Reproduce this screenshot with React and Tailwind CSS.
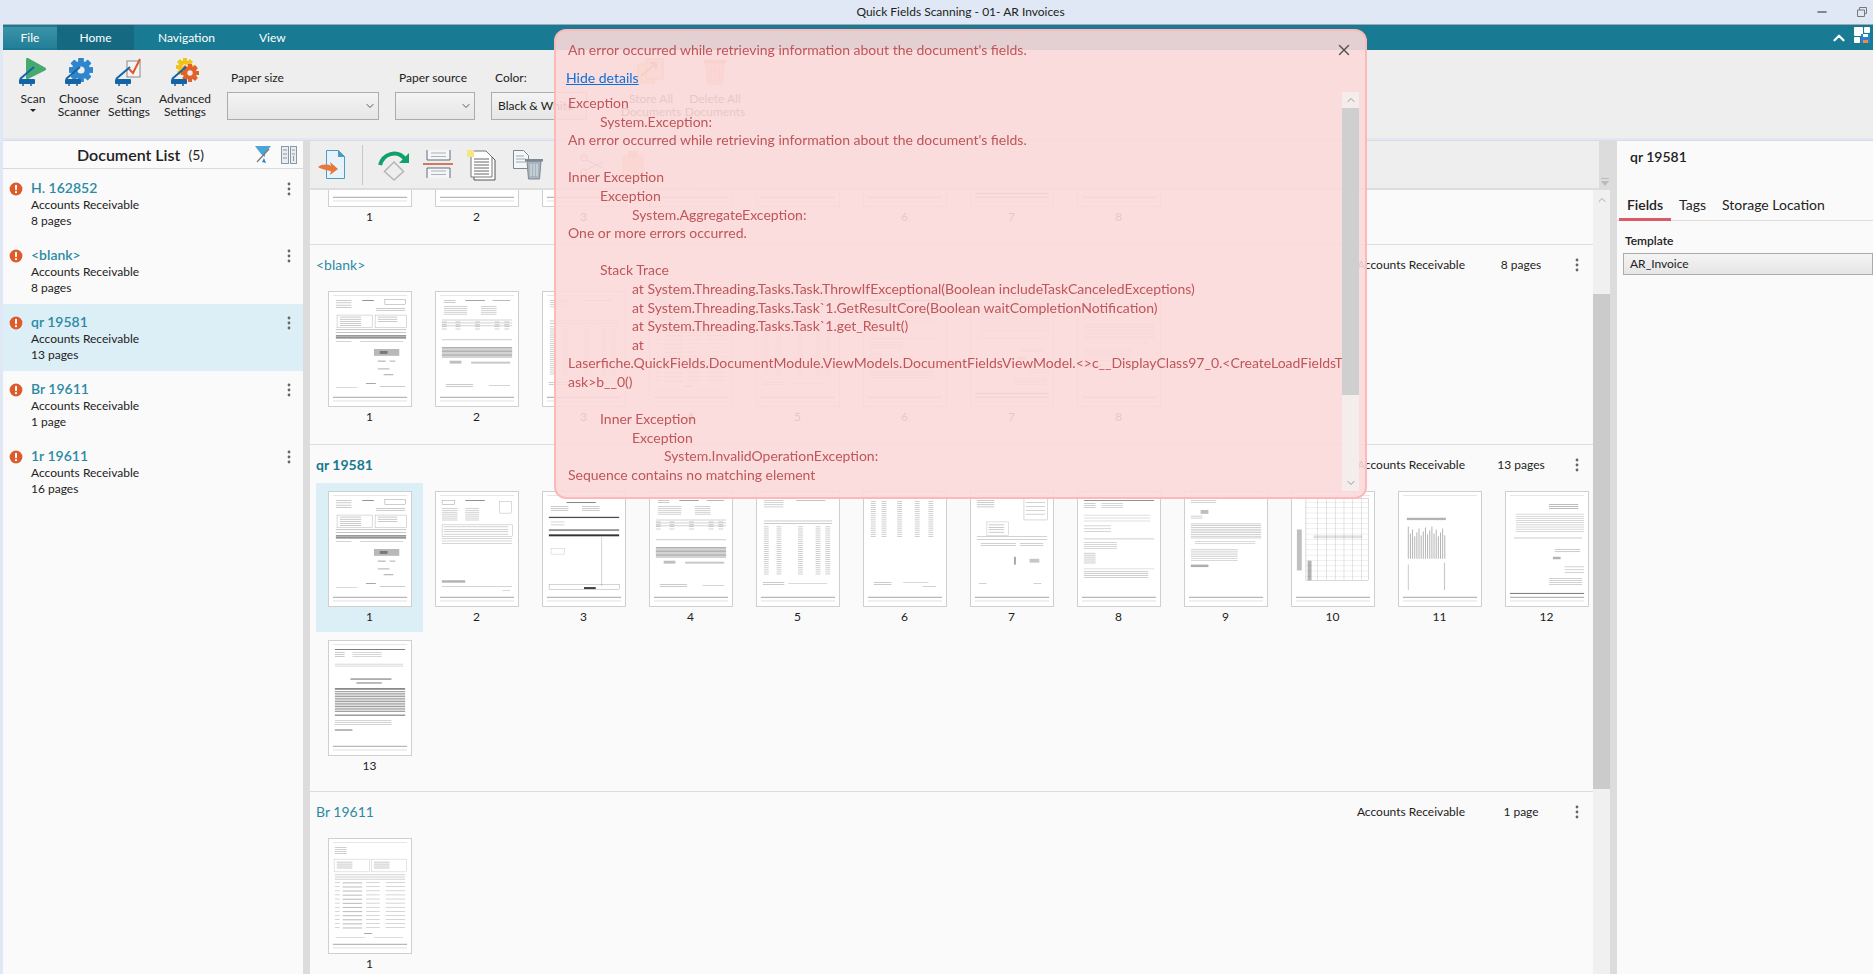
import React from 'react';
import { X, ChevronDown, ChevronUp, Minus } from 'lucide-react';

const FONT = { fontFamily: '"Lato", "Open Sans", sans-serif' };

// thumbnails are blurry scans, so they are only bars on a page: [x, y, w, h, opacity]
const rows = (x, y, w, n, gap, o = 0.35, h = 0.6) => Array.from({ length: n }, (_, i) => [x, y + i * gap, w, h, o]);
const box = (x, y, w, h, o = 0.4) => [[x, y, w, 0.5, o], [x, y + h, w, 0.5, o], [x, y, 0.5, h, o], [x + w, y, 0.5, h, o]];
const foot = [[4, 3, 76, 0.5, 0.2], [4, 107, 76, 0.8, 0.45], [4, 111, 76, 0.5, 0.25]];
const columns = (y, n, gap, xs) => xs.map((x) => rows(x, y, 5, n, gap, 0.32)).flat();

const invoice = (dark) => [
  ...foot, ...rows(7, 8, 16, 4, 2.4), [34, 8, 12, 0.8, 0.55], ...box(57, 7, 21, 5), ...rows(48, 16, 30, 2, 2),
  ...box(8, 23, 36, 13, 0.3), ...box(47, 23, 32, 13, 0.3), ...rows(11, 25, 22, 5, 2.2), ...rows(50, 25, 20, 3, 2.2),
  ...rows(7, 38, 72, 2, 3, 0.4), ...rows(7, 44, 72, 2, 2, dark ? 0.6 : 0.3, dark ? 1.2 : 0.6),
  [7, 50, 16, 0.7, 0.25], [32, 50, 44, 0.7, 0.25], [46, 58, 26, dark ? 7 : 4, 0.28], [52, 60, 8, 3, 0.35],
  [50, 70, 8, 0.8, 0.45], [62, 70, 6, 0.8, 0.4], [50, 78, 12, 0.8, 0.4], [56, 84, 10, 0.8, 0.45], [38, 93, 10, 0.8, 0.45], [52, 96, 26, 0.6, 0.35], [7, 97, 22, 0.5, 0.3],
];
const dense = [
  ...foot, ...rows(8, 8, 12, 2, 2), [30, 8, 20, 0.8, 0.45], [58, 8, 18, 0.8, 0.35], ...rows(8, 14, 24, 5, 2, 0.3), ...rows(46, 14, 16, 5, 2, 0.3),
  ...rows(6, 28, 72, 3, 3, 0.3), ...columns(30, 4, 2.4, [6, 20, 40, 60, 70]), [6, 48, 72, 1, 0.2], ...rows(6, 56, 72, 8, 1.4, 0.35, 0.9), [14, 70, 12, 3, 0.25], [36, 71, 40, 2, 0.22], ...rows(10, 94, 28, 2, 2), [54, 95, 22, 0.5, 0.35],
];
const shipped = [
  ...foot, ...box(6, 8, 13, 4), [30, 8, 20, 0.8, 0.55], ...box(65, 9, 12, 12, 0.3), ...rows(6, 16, 16, 7, 2, 0.3), ...rows(30, 16, 14, 7, 2, 0.3), ...box(6, 33, 72, 12, 0.3), ...rows(8, 35, 66, 4, 2.5, 0.3),
  ...rows(6, 47, 72, 3, 2.5, 0.28), [6, 90, 24, 2.5, 0.3], [6, 96, 72, 0.5, 0.35], [68, 100, 8, 0.7, 0.22],
];
const billed = [
  ...foot, [24, 10, 30, 0.9, 0.55], ...rows(8, 14, 18, 3, 2), ...rows(40, 14, 18, 3, 2), [6, 25, 72, 1.3, 0.7], [6, 38, 72, 1.2, 0.65], [6, 43, 72, 2, 0.8], ...rows(8, 30, 14, 2, 3, 0.28), ...box(8, 57, 14, 6, 0.22), [60, 46, 0.5, 50, 0.35], ...box(6, 94, 72, 5, 0.35), [42, 97, 12, 2, 0.75],
];
const table = [
  ...foot, ...rows(7, 8, 20, 4, 2.2, 0.3), [40, 8, 30, 0.7, 0.35], ...rows(7, 29, 70, 2, 2.4, 0.35), ...columns(35, 24, 2.1, [7, 20, 42, 60, 70]), ...rows(6, 92, 22, 2, 2), [32, 93, 40, 0.5, 0.3],
];
const tableShort = [
  ...foot, ...rows(7, 4, 70, 2, 2, 0.35), ...columns(9, 18, 2.1, [7, 18, 34, 52, 66]), ...rows(10, 92, 18, 2, 2), [40, 92, 26, 0.5, 0.3], [60, 96, 14, 0.6, 0.3],
];
const remit = [
  ...foot, ...rows(6, 8, 18, 4, 2.2, 0.35), ...box(54, 6, 24, 22, 0.3), ...rows(56, 10, 20, 4, 4, 0.3), ...box(16, 30, 22, 14, 0.25), ...rows(18, 33, 16, 4, 2.5), ...rows(6, 45, 72, 2, 3, 0.3), ...rows(10, 52, 36, 2, 2, 0.32), ...rows(50, 52, 24, 2, 2, 0.32), [44, 66, 2, 8, 0.35], [60, 68, 10, 4, 0.22], [8, 93, 8, 0.6, 0.3], [64, 93, 8, 0.6, 0.3],
];
const letter = [
  ...foot, [6, 8, 72, 0.8, 0.55], ...rows(6, 11, 12, 3, 2, 0.32), ...rows(24, 11, 22, 3, 2, 0.28), ...rows(6, 23, 68, 3, 3, 0.22), ...rows(6, 34, 28, 3, 3, 0.28), [6, 47, 72, 1.2, 0.16], ...rows(6, 51, 34, 4, 2, 0.28), ...rows(6, 62, 12, 6, 2, 0.32), [6, 78, 72, 0.7, 0.18], ...rows(6, 81, 66, 4, 2, 0.32),
];
const notice = [
  ...foot, ...rows(6, 6, 26, 3, 2, 0.28), [16, 18, 8, 4, 0.25], ...rows(6, 24, 12, 2, 2, 0.3), ...rows(6, 32, 72, 9, 1.8, 0.3), ...rows(10, 50, 62, 2, 2, 0.25), ...rows(6, 58, 48, 7, 1.9, 0.26), [6, 74, 18, 2.5, 0.32],
];
const sideways = [
  ...foot, ...box(14, 6, 64, 84, 0.3), ...rows(14, 10, 64, 15, 5.4, 0.1), ...Array.from({ length: 6 }, (_, c) => [26 + c * 9, 6, 0.5, 84, 0.22]), [5, 38, 5, 42, 0.25], [22, 44, 50, 3, 0.12], [16, 70, 4, 20, 0.3],
];
const chart = [
  ...foot, [8, 26, 40, 2.4, 0.3], ...Array.from({ length: 18 }, (_, c) => [9 + c * 2.2, 35 + (c * 7) % 11, 1, 33 - (c * 7) % 11, 0.3]), [9, 74, 1.2, 26, 0.18], [46, 72, 1.2, 28, 0.22],
];
const bulletin = [
  ...foot, ...rows(44, 12, 30, 3, 2, 0.45), ...rows(10, 22, 70, 9, 2.2, 0.26), [8, 46, 70, 1.4, 0.15], ...rows(50, 58, 26, 2, 2.5), [48, 66, 8, 2.5, 0.3], ...rows(60, 76, 20, 3, 3, 0.3), ...rows(44, 88, 34, 4, 2, 0.3), [4, 103, 76, 0.9, 0.6],
];
const statement = [
  ...foot, [6, 8, 72, 0.8, 0.65], ...rows(6, 11, 10, 3, 2), ...rows(24, 11, 30, 3, 2, 0.28), ...rows(6, 23, 70, 2, 2, 0.26), [22, 38, 42, 1.2, 0.5], [28, 42, 26, 1.2, 0.45], [6, 48, 72, 1.4, 0.6], ...rows(6, 51, 72, 13, 1.7, 0.42, 0.9), [6, 75, 72, 1.2, 0.5], ...rows(6, 81, 58, 3, 2, 0.3), [6, 90, 18, 1.6, 0.35],
];
const fieldList = [
  ...foot, ...rows(6, 8, 12, 4, 2, 0.32), ...box(5, 20, 36, 13, 0.22), ...box(43, 20, 36, 13, 0.22), ...rows(8, 23, 16, 4, 2), ...rows(46, 23, 16, 4, 2), ...rows(6, 36, 72, 3, 2.2, 0.3),
  ...Array.from({ length: 12 }, (_, r) => [[6, 44 + r * 4.2, 5, 0.6, 0.28], [14, 44 + r * 4.2, 20, 1.1, 0.25], [38, 44 + r * 4.2, 14, 0.6, 0.28], [58, 44 + r * 4.2, 20, 0.6, 0.28]]).flat(),
  [36, 96, 8, 0.8, 0.45], [7, 100, 30, 0.5, 0.28], [46, 100, 30, 0.5, 0.28],
];

const Thumb = ({ bars, n, active }) => (
  <div className={`w-[107px] h-[149px] shrink-0 pt-2 flex flex-col items-center ${active ? 'bg-[#dceef6]' : ''}`}>
    <svg viewBox="0 0 84 116" className="w-21 h-29 shrink-0 bg-white border border-[#cfcfcf]">
      <g className="blur-[0.3px]">
        {bars.map((b, i) => <rect key={i} x={b[0]} y={b[1]} width={b[2]} height={b[3]} fill="#000" fillOpacity={b[4]} />)}
      </g>
    </svg>
    <span className="mt-0.5 h-4 text-xs leading-4 text-[#222]">{n}</span>
  </div>
);

const Dots = () => (
  <svg viewBox="0 0 4 14" className="w-1 h-3.5 fill-[#666]">
    <circle cx="2" cy="2" r="1.4" /><circle cx="2" cy="7" r="1.4" /><circle cx="2" cy="12" r="1.4" />
  </svg>
);

const Alert = () => (
  <svg viewBox="0 0 14 14" className="w-3.5 h-3.5 shrink-0 mt-1">
    <circle cx="7" cy="7" r="6.4" fill="#dd5a2b" />
    <rect x="6" y="2.8" width="2" height="5.4" rx="1" fill="#fff" />
    <circle cx="7" cy="10.2" r="1.1" fill="#fff" />
  </svg>
);

const Scanner = () => (
  <g fill="none" stroke="#1464a5">
    <path d="M1 21 L15 9" strokeWidth="2" />
    <rect x="0" y="21" width="16" height="5" rx="1" fill="#1464a5" stroke="none" />
    <path d="M3 27h2M11 27h2" strokeWidth="1.5" />
  </g>
);

const Gear = ({ cx, cy, r, fill, hole = '#eee' }) => {
  const teeth = Array.from({ length: 8 }, (_, i) => i * 45);
  return (
    <g fill={fill}>
      {teeth.map((a) => <rect key={a} x={cx - r * 0.22} y={cy - r} width={r * 0.44} height={r * 2} rx="0.5" transform={`rotate(${a} ${cx} ${cy})`} />)}
      <circle cx={cx} cy={cy} r={r * 0.76} />
      <circle cx={cx} cy={cy} r={r * 0.3} fill={hole} />
    </g>
  );
};

const icons = {
  scan: <><path d="M7 1.5 C7 0 8.5 -.3 9.5 .3 L26 9.5 C27.5 10.5 27.5 11.5 26 12.5 L9 21 C8 21.5 7 21 7 20 Z" fill="#46a96f" /><Scanner /></>,
  choose: <><Gear cx={16} cy={12} r={12} fill="#2f86cc" /><Scanner /></>,
  settings: <><rect x="12" y="3" width="13" height="16" fill="#f4f4f4" stroke="#8a8a8a" /><path d="M14 11 L18 15 L25 1" fill="none" stroke="#e2562b" strokeWidth="2" /><Scanner /></>,
  advanced: <><Gear cx={14} cy={9} r={9} fill="#f0c419" /><Gear cx={19} cy={15} r={9} fill="#e2622a" /><Scanner /></>,
  store: <><rect x="1" y="6" width="16" height="19" fill="#f2d27a" stroke="#c9a13c" /><rect x="9" y="1" width="17" height="20" fill="#f6c9a0" stroke="#e0873a" /><path d="M4 18 L18 6 M13 5h6v6" stroke="#e0622a" strokeWidth="2" fill="none" /></>,
  remove: <><path d="M5 5h18l-2 21H7Z" fill="#f2c2a4" stroke="#e29866" /><rect x="3" y="2" width="22" height="3" fill="#e29866" /><path d="M10 8v15M14 8v15M18 8v15" stroke="#d88a5c" /></>,
};

const RibbonButton = ({ icon, lines, width, arrow }) => (
  <div className={`${width} flex flex-col items-center pt-2 text-xs leading-[13px] text-[#222] text-center`}>
    <svg viewBox="0 0 28 28" className="w-7 h-7 mb-1.5 shrink-0 overflow-visible">{icons[icon]}</svg>
    {lines.map((l) => <span key={l} className="whitespace-nowrap">{l}</span>)}
    {arrow && <span className="mt-1 w-0 h-0 border-x-[3px] border-t-[3px] border-x-transparent border-t-[#222]" />}
  </div>
);

const Combo = ({ label, width, value }) => (
  <div className="flex flex-col pt-5">
    <span className="pl-1 mb-1.5 text-xs leading-4 text-[#222]">{label}</span>
    <div className={`${width} h-7 pl-1.5 pr-0.5 flex items-center justify-between text-xs whitespace-nowrap overflow-hidden text-[#222] bg-linear-to-b from-[#f4f4f4] to-[#e6e6e6] border border-[#acacac]`}>
      <span>{value}</span>
      {!value && <ChevronDown size={12} className="ml-auto text-[#555]" />}
    </div>
  </div>
);

const docs = [
  { name: 'H. 162852', pages: '8 pages' },
  { name: '<blank>', pages: '8 pages' },
  { name: 'qr 19581', pages: '13 pages', active: true },
  { name: 'Br 19611', pages: '1 page' },
  { name: '1r 19611', pages: '16 pages' },
];

const DocRow = ({ doc }) => (
  <div className={`h-[67px] flex gap-2 pl-1.5 pr-3 pt-2 ${doc.active ? 'bg-[#dceef6]' : ''}`}>
    <Alert />
    <div className="flex-1 flex flex-col">
      <span className="h-[19px] text-sm leading-[19px] font-semibold text-[#2b8aa3]">{doc.name}</span>
      <span className="text-xs leading-4 text-[#222]">Accounts Receivable</span>
      <span className="text-xs leading-4 text-[#222]">{doc.pages}</span>
    </div>
    <div className="pt-1"><Dots /></div>
  </div>
);

const SectionHead = ({ title, pages, active }) => (
  <div className="flex items-center pt-2.5 pb-2 pl-1.5 pr-2">
    <span className={`h-5 text-sm leading-5 ${active ? 'font-bold text-[#17788f]' : 'text-[#2b8aa3]'}`}>{title}</span>
    <span className="ml-auto mr-4 text-xs text-[#222]">Accounts Receivable</span>
    <span className="w-20 mr-2 text-center text-xs text-[#222]">{pages}</span>
    <span className="w-4 flex justify-center"><Dots /></span>
  </div>
);

const ThumbRow = ({ pages, start = 1, activeAt }) => (
  <div className="flex pl-1.5 mr-0.5 overflow-hidden">
    {pages.map((bars, i) => <Thumb key={i} bars={bars} n={start + i} active={activeAt === i} />)}
  </div>
);

const blankDocs = [invoice(true), dense, table, fieldList, table, letter, bulletin, notice];
const qrDocs = [invoice(true), shipped, billed, dense, table, tableShort, remit, letter, notice, sideways, chart, bulletin];

const errorLines = [
  [0, 'Exception'],
  [1, 'System.Exception:'],
  [0, "An error occurred while retrieving information about the document's fields."],
  [0, ''],
  [0, 'Inner Exception'],
  [1, 'Exception'],
  [2, 'System.AggregateException:'],
  [0, 'One or more errors occurred.'],
  [0, ''],
  [1, 'Stack Trace'],
  [2, 'at System.Threading.Tasks.Task.ThrowIfExceptional(Boolean includeTaskCanceledExceptions)'],
  [2, 'at System.Threading.Tasks.Task`1.GetResultCore(Boolean waitCompletionNotification)'],
  [2, 'at System.Threading.Tasks.Task`1.get_Result()'],
  [2, 'at'],
  [0, 'Laserfiche.QuickFields.DocumentModule.ViewModels.DocumentFieldsViewModel.<>c__DisplayClass97_0.<CreateLoadFieldsT'],
  [0, 'ask>b__0()'],
  [0, ''],
  [1, 'Inner Exception'],
  [2, 'Exception'],
  [3, 'System.InvalidOperationException:'],
  [0, 'Sequence contains no matching element'],
];
const indents = ['', 'pl-8', 'pl-16', 'pl-24'];

const ErrorPopup = () => (
  <div className="fixed left-[554px] top-[29px] w-[813px] h-[470px] flex flex-col rounded-xl border-2 border-[#fbb9b9] bg-[#fbd9d9]/90 text-sm text-[#c0555a]">
    <div className="flex items-center justify-between h-9 pl-3 pr-3 pt-0.5">
      <span>An error occurred while retrieving information about the document's fields.</span>
      <X size={18} className="text-[#555]" />
    </div>
    <a className="pl-2.5 mt-px h-5 leading-5 text-[#0b6fdc] underline">Hide details</a>
    <div className="flex-1 flex mb-1.5 mr-1.5 overflow-hidden mt-1">
      <div className="flex-1 pl-3 pt-0.5 leading-[1.33] whitespace-nowrap overflow-hidden">
        {errorLines.map(([lvl, t], i) => <div key={i} className={`h-[18.6px] ${indents[lvl]}`}>{t}</div>)}
      </div>
      <div className="w-[17px] shrink-0 flex flex-col bg-[#f5ecec]">
        <ChevronUp size={12} className="mx-auto mt-0.5 mb-0.5 text-[#999]" />
        <div className="h-[287px] bg-[#cfcfcf]" />
        <ChevronDown size={12} className="mx-auto mt-auto mb-0.5 text-[#999]" />
      </div>
    </div>
  </div>
);

const ToolIcon = ({ children, className = '' }) => <svg viewBox="0 0 30 30" className={`w-7.5 h-7.5 shrink-0 overflow-visible ${className}`}>{children}</svg>;

export default function App() {
  return (
    <div style={FONT} className="w-screen h-screen flex flex-col overflow-hidden bg-[#dfe8f4] border-l-3 border-[#dfe8f4]">
      {/* Title bar */}
      <div className="relative h-[25px] shrink-0 -ml-[3px] pl-12 flex items-center justify-center border-b border-[#9fa9b3] text-xs text-[#222]">
        Quick Fields Scanning - 01- AR Invoices
        <div className="absolute right-0 top-0 h-6 flex items-center gap-7 pr-1.5">
          <Minus size={14} className="text-[#666]" strokeWidth={2.5} />
          <svg viewBox="0 0 10 10" className="w-2.5 h-2.5 fill-none stroke-[#777]"><path d="M.5 3h7v6.5h-7zM2.5 3V.5h7v6h-2" /></svg>
        </div>
      </div>

      {/* Ribbon tabs */}
      <div className="h-[25px] shrink-0 flex bg-[#187b93] text-xs text-white">
        <div className="w-[54px] my-0.5 flex items-center justify-center bg-linear-to-b from-[#3b93a8] to-[#217f97]">File</div>
        <div className="w-[77px] flex items-center justify-center bg-[#156a82]">Home</div>
        <span className="ml-6 self-center">Navigation</span>
        <span className="ml-11 self-center">View</span>
        <div className="ml-auto flex items-start pt-0.5 pr-[3px]">
          <ChevronUp size={18} strokeWidth={3} className="mt-0.5 mr-1.5" />
          <svg viewBox="0 0 16 16" className="w-4 h-4">
            <rect width="9" height="9" rx="1" fill="#fff" />
            <rect x="10" width="6" height="6" rx="1" fill="#fff" />
            <rect y="10" width="6" height="6" rx="1" fill="#fff" />
            <rect x="7" y="7" width="9" height="9" fill="#2f7fd0" />
            <rect x="9" y="7" width="5" height="3" fill="#fff" />
            <rect x="9" y="13" width="5" height="3" fill="#f08a3c" />
          </svg>
        </div>
      </div>

      {/* Ribbon */}
      <div className="h-[88px] shrink-0 flex pl-1.5 bg-[#eeeeee]">
        <RibbonButton icon="scan" lines={['Scan']} width="w-12" arrow />
        <RibbonButton icon="choose" lines={['Choose', 'Scanner']} width="w-11" />
        <RibbonButton icon="settings" lines={['Scan', 'Settings']} width="w-14" />
        <RibbonButton icon="advanced" lines={['Advanced', 'Settings']} width="w-14" />
        <div className="ml-3.5"><Combo label="Paper size" width="w-[152px]" /></div>
        <div className="ml-4"><Combo label="Paper source" width="w-20" /></div>
        <div className="ml-4"><Combo label="Color:" width="w-24" value="Black & White" /></div>
        <div className="ml-8 flex">
          <RibbonButton icon="store" lines={['Store All', 'Documents']} width="w-16" />
          <RibbonButton icon="remove" lines={['Delete All', 'Documents']} width="w-16" />
        </div>
        <div className="ml-2.5 border-l border-[#dcdcdc]" />
      </div>

      {/* Panels */}
      <div className="flex-1 min-h-0 flex mt-0.5 border-t border-[#dcdcdc] bg-[#fafafa]">
        {/* Document list */}
        <div className="w-[300px] shrink-0 flex flex-col">
          <div className="h-7 shrink-0 flex items-center pl-[74px] pr-1.5 border-b border-[#d9d9d9] text-[#222]">
            <span className="text-base font-semibold">Document List</span>
            <span className="ml-2 text-sm">(5)</span>
            <svg viewBox="0 0 16 18" className="ml-auto w-4 h-[18px] overflow-visible">
              <path d="M0 0h16l-6 7v4L6 8Z" fill="#4aa5d8" />
              <path d="M14 3 L2 16" stroke="#777" strokeWidth="1.2" />
              <path d="M9 12l2 5-4-1Z" fill="#2f86cc" />
            </svg>
            <svg viewBox="0 0 16 18" className="ml-2.5 w-4 h-[18px] fill-[#e8edf2] stroke-[#8a97a5]">
              <rect x=".5" y=".5" width="7" height="17" /><rect x="9.5" y=".5" width="6" height="17" />
              <path d="M2 4h4M2 8h4M2 12h4M11 4h3M11 8h3M12.5 10v5" fill="none" />
            </svg>
          </div>
          <div className="flex flex-col pt-px">
            {docs.map((d) => <DocRow key={d.name} doc={d} />)}
          </div>
        </div>

        <div className="w-[7px] shrink-0 bg-[#dcdcdc]" />

        {/* Pages */}
        <div className="flex-1 min-w-0 flex flex-col">
          <div className="h-[49px] shrink-0 flex items-center gap-3.5 pl-2 pr-3 bg-[#eeeeee] border-b-2 border-[#dddddd]">
            <ToolIcon>
              <path d="M8.5 .5h12l6 6v22h-18z" fill="#e8f2fa" stroke="#4a9cc4" /><path d="M20 0l7 7h-7z" fill="#4a9cc4" />
              <path d="M0 17c4-3 10-3 13-1l-1-4 8 7-8 6 1-4c-4-1-8-1-13-4z" fill="#e8773a" />
            </ToolIcon>
            <div className="w-px h-10 bg-[#c8c8c8] mr-0.5" />
            <ToolIcon>
              <path d="M15 12l9.5 9.5L15 30 5.5 21.5Z" fill="none" stroke="#b5b5b5" strokeWidth="1.5" />
              <path d="M1 15C4 4 18 -1 26 9" fill="none" stroke="#12a06a" strokeWidth="4" />
              <path d="M20 13h10V3Z" fill="#12a06a" />
            </ToolIcon>
            <ToolIcon>
              <path d="M4 0v10h23V0M4 28V18h23v10" fill="#f6f6f6" stroke="#5c6f82" />
              <path d="M8 3h15M8 6.5h15M8 21h15M8 24.5h15" stroke="#a9b2ba" />
              <path d="M0 14h30" stroke="#c9522a" strokeWidth="1.5" />
            </ToolIcon>
            <ToolIcon>
              <path d="M7 4h15l6 6v20H7z" fill="#fff" stroke="#555" />
              <path d="M4 1h15l6 6v20H4z" fill="#fff" stroke="#777" />
              <path d="M7 9h15M7 12h15M7 15h15M7 18h15M7 21h15M7 24h15" stroke="#666" />
              <rect x="0" y="0" width="7" height="7" fill="#f5e58a" />
            </ToolIcon>
            <ToolIcon className="ml-0.5">
              <path d="M.5 .5h10l5 5v13H.5z" fill="#f4f6f8" stroke="#7c8894" />
              <path d="M3 6h8M3 9h10M3 12h10" stroke="#a0a8b0" />
              <path d="M14 11h14l-1.5 18h-11z" fill="#a9b5be" stroke="#7c8894" />
              <rect x="12" y="9" width="18" height="2.5" fill="#7c8894" />
              <path d="M18 14v12M21 14v12M24 14v12" stroke="#dfe5ea" />
            </ToolIcon>
            <svg viewBox="0 0 26 28" className="ml-5 w-6.5 h-7 overflow-visible">
              <circle cx="7" cy="7" r="3" fill="none" stroke="#e2562b" /><circle cx="7" cy="21" r="3" fill="none" stroke="#e2562b" />
              <path d="M9 9l17 8M9 19l17-8" stroke="#6a8aa5" />
            </svg>
            <svg viewBox="0 0 24 28" className="ml-1 w-6 h-7">
              <path d="M1 4h22v24H1z" fill="#f3c18f" /><rect x="7" y="0" width="10" height="7" fill="#e8a869" />
            </svg>
            <div className="ml-auto -mr-3 w-[11px] self-stretch bg-[#dcdcdc] flex items-end justify-center pb-1 -mb-0.5">
              <svg viewBox="0 0 8 8" className="w-2 h-2 fill-[#bbb]"><path d="M0 0h8v1H0zM0 3h8L4 8z" /></svg>
            </div>
          </div>

          <div className="flex-1 min-h-0 flex">
            <div className="flex-1 min-w-0 flex flex-col overflow-hidden">
              <div className="h-[54px] shrink-0 flex flex-col justify-end overflow-hidden">
                <div className="mb-3 -mt-40"><ThumbRow pages={blankDocs} /></div>
              </div>
              <div className="h-50 shrink-0 border-t border-[#dddddd]">
                <SectionHead title="<blank>" pages="8 pages" />
                <ThumbRow pages={blankDocs} />
              </div>
              <div className="h-[347px] shrink-0 border-t border-[#dddddd]">
                <SectionHead title="qr 19581" pages="13 pages" active />
                <ThumbRow pages={qrDocs} activeAt={0} />
                <ThumbRow pages={[statement]} start={13} />
              </div>
              <div className="shrink-0 border-t border-[#dddddd]">
                <SectionHead title="Br 19611" pages="1 page" />
                <ThumbRow pages={[fieldList]} />
              </div>
            </div>
            <div className="w-[17px] shrink-0 flex flex-col bg-[#f0f0f0]">
              <ChevronUp size={12} className="mx-auto mt-1 text-[#aaa]" />
              <div className="mt-[88px] h-[495px] bg-[#cbcbcb]" />
            </div>
          </div>
        </div>

        <div className="w-[7px] shrink-0 bg-[#dcdcdc]" />

        {/* Properties */}
        <div className="w-64 shrink-0 flex flex-col text-[#222]">
          <div className="h-[52px] pl-[13px] pt-[6px] text-sm font-semibold">qr 19581</div>
          <div className="h-7 flex items-start border-b border-[#dddddd] text-sm">
            <span className="ml-0.5 w-[52px] h-7 text-center leading-6 font-semibold border-b-[3px] border-[#dc5a68]">Fields</span>
            <span className="ml-2 leading-6">Tags</span>
            <span className="ml-4 leading-6">Storage Location</span>
          </div>
          <div className="pt-3 pl-1.5 flex flex-col">
            <span className="pl-0.5 mb-1 text-xs leading-4 font-semibold">Template</span>
            <div className="h-[22px] pl-1.5 flex items-center text-xs bg-linear-to-b from-[#f4f4f4] to-[#e6e6e6] border border-[#acacac]">AR_Invoice</div>
          </div>
        </div>
      </div>

      <ErrorPopup />
    </div>
  );
}
